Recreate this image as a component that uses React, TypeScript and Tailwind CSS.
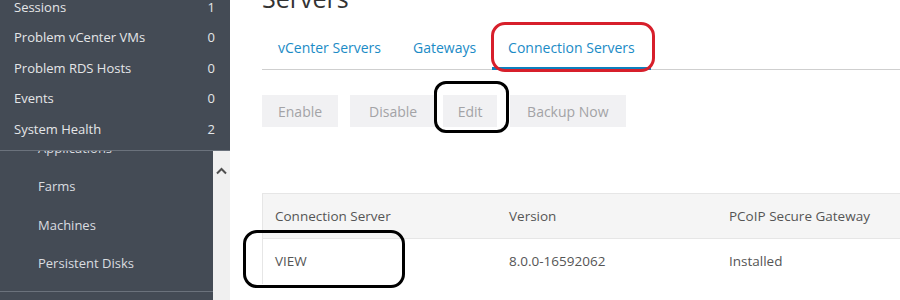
import React from 'react';

const summary = [
  { label: 'Sessions', count: 1 },
  { label: 'Problem vCenter VMs', count: 0 },
  { label: 'Problem RDS Hosts', count: 0 },
  { label: 'Events', count: 0 },
  { label: 'System Health', count: 2 },
];

const inventory = ['Applications', 'Farms', 'Machines', 'Persistent Disks'];

const tabs = ['vCenter Servers', 'Gateways', 'Connection Servers'];
// spacing of the action buttons as measured
const actions = [
  { label: 'Enable', cls: 'px-[16px]' },
  { label: 'Disable', cls: 'ml-[12px] px-[19px]' },
  { label: 'Edit', cls: 'ml-[7px] px-[14.5px]' },
  { label: 'Backup Now', cls: 'ml-[13px] px-[17px]' },
];

function Sidebar() {
  return (
    <aside className="w-[230px] shrink-0 flex flex-col h-[300px] overflow-hidden">
      <div className="bg-[#444b55] overflow-hidden h-[151px] border-b border-[#6b727c]">
        <div className="-mt-[8px]">
          {summary.map((s) => (
            <div key={s.label} className="h-[30.5px] flex items-center justify-between pl-[14px] pr-[15px] text-[13px] text-[#e4e6e8]">
              <span>{s.label}</span>
              <span>{s.count}</span>
            </div>
          ))}
        </div>
      </div>
      <div className="flex flex-1 overflow-hidden">
        <div className="w-[213px] bg-[#444b55] overflow-hidden">
          <div className="-mt-[22px]">
            {inventory.map((item) => (
              <div key={item} className="h-[38.5px] flex items-center pl-[38px] text-[13px] text-[#dadde0]">
                {item}
              </div>
            ))}
          </div>
          <div className="mt-[8px] border-t border-[#6b727c]" />
        </div>
        <div className="w-[17px] bg-[#f0f0f0] flex justify-center pt-[16px]">
          <svg width="11" height="8" viewBox="0 0 11 8">
            <path d="M1 6.5 L5.5 2 L10 6.5" fill="none" stroke="#505050" strokeWidth="2" />
          </svg>
        </div>
      </div>
    </aside>
  );
}

export default function App() {
  return (
    <div className="w-[900px] h-[300px] overflow-hidden flex bg-white relative" style={{ fontFamily: '"Open Sans", "Noto Sans", sans-serif' }}>
      <Sidebar />
      <main className="flex-1 pl-[32px] flex flex-col overflow-hidden">
        <h1 className="text-[25px] leading-[30px] -mt-[17px] text-[#333]">Servers</h1>
        <div className="mt-[21px] flex border-b border-[#cfcfcf] h-[36px] items-stretch">
          {tabs.map((t, i) => (
            <div
              key={t}
              className={
                i === 2
                  ? 'px-[16px] flex items-center text-[14px] text-[#1b8bc6] border-b-[3px] border-[#0e7fbd] -mb-px pb-[6px]'
                  : 'px-[16px] flex items-center text-[14px] text-[#1b8bc6] pb-[9px]'
              }
            >
              {t}
            </div>
          ))}
        </div>
        <div className="mt-[25px] flex">
          {actions.map((a) => (
            <div key={a.label} className={`${a.cls} h-[32px] flex items-center bg-[#f1f1f3] text-[14px] text-[#a3a3a6]`}>
              {a.label}
            </div>
          ))}
        </div>
        <div className="mt-[66px] border-l border-t border-[#e6e6e6]">
          <div className="h-[45px] flex items-center bg-[#f5f5f5] border-b border-[#e6e6e6] text-[13.5px] text-[#555]">
            <div className="w-[246px] pl-[12px]">Connection Server</div>
            <div className="w-[220px]">Version</div>
            <div className="flex-1">PCoIP Secure Gateway</div>
          </div>
          <div className="h-[45px] flex items-center text-[13.5px] text-[#555]">
            <div className="w-[246px] pl-[12px]">VIEW</div>
            <div className="w-[220px]">8.0.0-16592062</div>
            <div className="flex-1">Installed</div>
          </div>
        </div>
      </main>
      <div className="absolute left-[491px] top-[22px] w-[164px] h-[50px] border-[3px] border-[#d71f2b] rounded-[14px]" />
      <div className="absolute left-[434px] top-[81px] w-[75px] h-[52px] border-[3px] border-black rounded-[12px]" />
      <div className="absolute left-[243px] top-[230px] w-[162px] h-[58px] border-[3px] border-black rounded-[14px]" />
    </div>
  );
}
